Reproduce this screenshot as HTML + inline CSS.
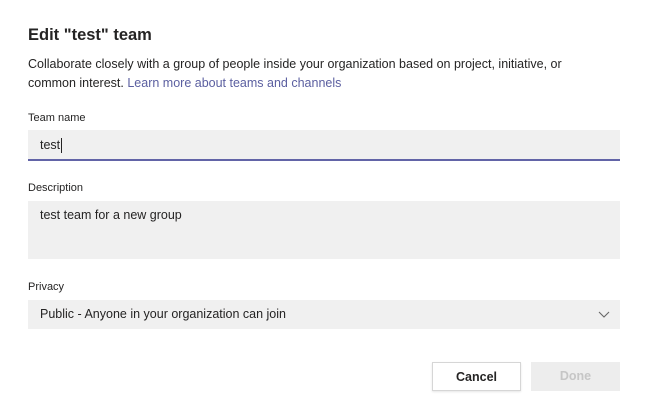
<!DOCTYPE html>
<html><head><style>
body{margin:0;width:649px;height:416px;background:#fff;font-family:"Liberation Sans",sans-serif;color:#252424;position:relative;overflow:hidden}
div{position:absolute}
.t{left:28px;top:26px;font-size:16.5px;font-weight:bold;color:#252424}
.d{left:28px;top:55px;font-size:12.5px;line-height:19px;width:560px}
.l{left:28px;font-size:11px;color:#252424}
.f{left:28px;width:592px;background:#f0f0f0;font-size:12.5px;box-sizing:border-box;padding-left:12px}
.b{width:89px;height:29px;box-sizing:border-box;font-size:12.5px;font-weight:bold;text-align:center;line-height:28px;top:362px}
</style></head><body>
<div class="t">Edit "test" team</div>
<div class="d">Collaborate closely with a group of people inside your organization based on project, initiative, or common interest. <span style="color:#5b5fa0">Learn more about teams and channels</span></div>
<div class="l" style="top:112px">Team name</div>
<div class="f" style="top:130px;height:31px;line-height:30px;border-bottom:2px solid #6264a7">test<span style="border-left:1px solid #252424;margin-left:1px;height:15px;display:inline-block;vertical-align:middle"></span></div>
<div class="l" style="top:182px">Description</div>
<div class="f" style="top:201px;height:58px;padding-top:7px">test team for a new group</div>
<div class="l" style="top:281px">Privacy</div>
<div class="f" style="top:300px;height:29px;line-height:29px">Public - Anyone in your organization can join
<svg style="position:absolute;right:10px;top:11px" width="12" height="7" viewBox="0 0 12 7"><path d="M1 1l5 5 5-5" fill="none" stroke="#666" stroke-width="1.1"/></svg></div>
<div class="b" style="left:432px;border:1px solid #d6d6d6;background:#fff;box-shadow:0 1px 2px rgba(0,0,0,.1)">Cancel</div>
<div class="b" style="left:531px;background:#ededed;color:#c6c6c6">Done</div>
</body></html>
